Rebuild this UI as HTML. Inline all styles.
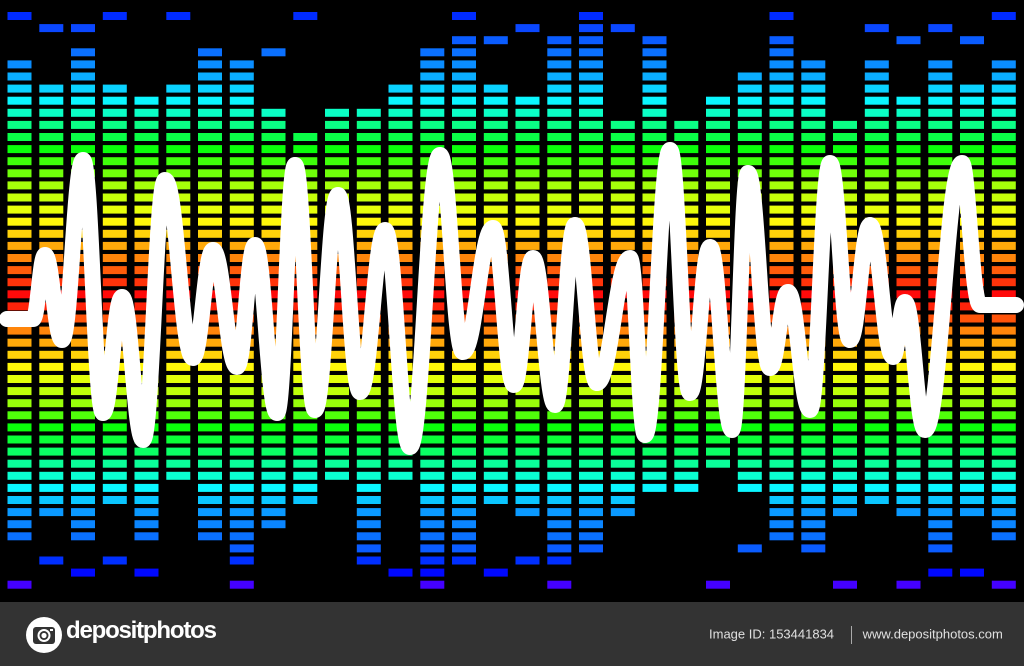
<!DOCTYPE html>
<html><head><meta charset="utf-8">
<style>
html,body{margin:0;padding:0;background:#000;}
#wrap{position:relative;width:1024px;height:666px;overflow:hidden;background:#000;font-family:"Liberation Sans",sans-serif;}
#eq{position:absolute;left:0;top:0;}
#foot{position:absolute;left:0;top:602px;width:1024px;height:64px;background:#333;}
#logo{position:absolute;left:66px;top:15px;color:#fff;font-weight:bold;font-size:24px;letter-spacing:-1.2px;}
#info{position:absolute;left:709px;top:24px;color:#e0e0e0;font-size:13px;white-space:nowrap;}
</style></head><body>
<div id="wrap">
<svg id="eq" width="1024" height="602" xmlns="http://www.w3.org/2000/svg"><g id="bars"></g><path id="wave" fill="none" stroke="#fff" stroke-width="16" stroke-linecap="round" stroke-linejoin="round"/></svg>
<div id="foot">
<svg style="position:absolute;left:25px;top:14px" width="38" height="38" viewBox="0 0 38 38">
<circle cx="19" cy="19" r="18" fill="#fff"/>
<rect x="8" y="11" width="22" height="17" rx="3" fill="#333"/>
<circle cx="19" cy="19.5" r="6.5" fill="#fff"/>
<circle cx="19" cy="19.5" r="4.5" fill="#333"/>
<circle cx="19" cy="19.5" r="2.6" fill="#fff"/>
<rect x="25" y="13" width="3" height="2" fill="#fff"/>
</svg>
<div id="logo">depositphotos</div>
<div id="info">Image ID: 153441834 <span style="display:inline-block;width:1px;height:18px;background:#aaa;vertical-align:middle;margin:0 11px 0 13px"></span>www.depositphotos.com</div>
</div>
</div>
<script>
var cols=[[4,[0],43,[47]],[6,[1],41,[45]],[3,[1],43,[46]],[6,[0],40,[45]],[7,[],43,[46]],[6,[0],38,[]],[3,[],43,[]],[4,[],45,[47]],
[8,[3],42,[]],[10,[0],40,[]],[8,[],38,[]],[8,[],45,[]],[6,[],38,[46]],[3,[],47,[]],[2,[0],45,[]],[6,[2],40,[46]],
[7,[1],41,[45]],[2,[],45,[47]],[0,[],44,[]],[9,[1],41,[]],[2,[],39,[]],[9,[],39,[]],[7,[],37,[47]],[5,[],39,[44]],
[2,[0],43,[]],[4,[],44,[]],[9,[],41,[47]],[4,[1],40,[]],[7,[2],41,[47]],[4,[1],44,[46]],[6,[2],41,[46]],[4,[0],43,[47]]];
function interp(tab,d){for(var i=0;i<tab.length-1;i++){if(d<=tab[i+1][0]){var t=(d-tab[i][0])/(tab[i+1][0]-tab[i][0]);return tab[i][1]+t*(tab[i+1][1]-tab[i][1]);}}return tab[tab.length-1][1];}
var topT=[[0,0],[3,30],[6,58],[9,82],[12,120],[14,150],[16,182],[18,200],[20,215],[23,230]];
var botT=[[0,0],[1,6],[3,30],[6,58],[9,85],[11,120],[13,142],[16,182],[18,205],[21,220],[23,238],[24,256]];
function col(k){var h=k<=23?interp(topT,23-k):interp(botT,k-23);var l=(h>225)?50:52;return "hsl("+h.toFixed(0)+",100%,"+l+"%)";}
var s="";
for(var c=0;c<32;c++){var x=7.5+31.75*c,d=cols[c];var rows=[];for(var k=d[0];k<=d[2];k++)rows.push(k);rows=rows.concat(d[1],d[3]);
rows.forEach(function(k){var y=12+12.1*k;s+='<rect x="'+x.toFixed(1)+'" y="'+y.toFixed(1)+'" width="24" height="8" fill="'+col(k)+'"/>';});}
document.getElementById('bars').innerHTML=s;
var P=[[7,319],[33,319],[45,255],[62,340],[83,160],[103,413],[122,297],[143,440],[165,180],[193,358],[213,250],[237,367],[255,245],[277,413],[295,165],[315,410],[338,195],[360,392],[385,230],[410,447],[440,155],[463,352],[493,228],[514,385],[533,258],[555,405],[575,225],[597,383],[630,258],[645,435],[670,150],[690,393],[710,247],[732,430],[748,173],[770,368],[788,292],[810,410],[830,163],[850,340],[870,225],[893,357],[905,302],[925,430],[962,163]];
var dp="M7 319 L33 319";
for(var i=1;i<P.length-1;i++){var p1=P[i],p2=P[i+1];var dx=(p2[0]-p1[0])*0.42;
dp+=" C"+(p1[0]+dx).toFixed(1)+" "+p1[1]+" "+(p2[0]-dx).toFixed(1)+" "+p2[1]+" "+p2[0]+" "+p2[1];}
dp+=" C968 163 972 305 980 305 L1016 305";
document.getElementById('wave').setAttribute('d',dp);
</script>
</body></html>
